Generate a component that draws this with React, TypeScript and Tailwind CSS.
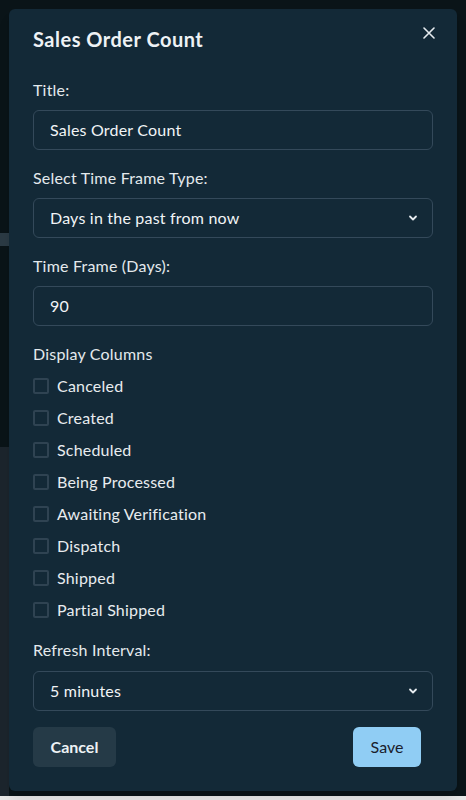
import React from "react";

const Chevron = () => (
  <svg width="12" height="12" viewBox="0 0 12 12" className="shrink-0">
    <path d="M3 4.5 L6 7.5 L9 4.5" fill="none" stroke="#e6ebef" strokeWidth="1.8" strokeLinecap="round" strokeLinejoin="round" />
  </svg>
);

const Field = ({ label, children }: { label: string; children: React.ReactNode }) => (
  <div className="flex flex-col gap-2">
    <div className="text-[16px] leading-6 text-[#e4e9ed] tracking-[0.2px]">{label}</div>
    {children}
  </div>
);

const Box = ({ text, select }: { text: string; select?: boolean }) => (
  <div className="h-10 rounded-md border border-[#34495a] flex items-center justify-between pl-4 pr-[13px] text-[16px] text-[#f1f4f6] tracking-[0.2px]">
    <span>{text}</span>
    {select && <Chevron />}
  </div>
);

const cols = [
  "Canceled",
  "Created",
  "Scheduled",
  "Being Processed",
  "Awaiting Verification",
  "Dispatch",
  "Shipped",
  "Partial Shipped",
];

export default function App() {
  return (
    <div
      className="relative w-[466px] h-[800px] bg-[#0a1418] overflow-hidden"
      style={{ fontFamily: "Lato, 'Open Sans', sans-serif" }}
    >
      <div className="absolute left-0 top-[233px] w-[9px] h-[13px] bg-[#2b3a44]" />
      <div className="absolute left-0 top-[447px] w-[9px] h-[353px] bg-[#1c252d]" />
      <div className="absolute left-0 bottom-0 w-full h-[4px] bg-[#e8e8e8]" />
      <div className="absolute left-[9px] top-[9px] w-[448px] h-[782px] rounded-md bg-[#132937] shadow-lg">
        <div className="relative px-6 pt-[15px] pb-4">
          <div className="text-[20px] leading-[30px] font-bold text-[#eef2f5] tracking-[0.5px]">Sales Order Count</div>
          <button className="absolute right-3 top-2 w-8 h-8 flex items-center justify-center">
            <svg width="12" height="12" viewBox="0 0 12 12">
              <path d="M1 1 L11 11 M11 1 L1 11" stroke="#e6ebef" strokeWidth="1.6" strokeLinecap="round" />
            </svg>
          </button>
        </div>
        <div className="px-6 pt-2 flex flex-col gap-4">
          <Field label="Title:">
            <Box text="Sales Order Count" />
          </Field>
          <Field label="Select Time Frame Type:">
            <Box text="Days in the past from now" select />
          </Field>
          <Field label="Time Frame (Days):">
            <Box text="90" />
          </Field>
          <div className="flex flex-col gap-2">
            <div className="text-[16px] leading-6 text-[#e4e9ed] tracking-[0.2px]">Display Columns</div>
            {cols.map((c) => (
              <div key={c} className="flex items-center gap-2 h-6">
                <div className="w-4 h-4 rounded-[2px] border-2 border-[#2f4352]" />
                <span className="text-[16px] text-[#e8ecef] tracking-[0.2px]">{c}</span>
              </div>
            ))}
          </div>
          <div className="flex flex-col gap-2">
            <div className="text-[16px] leading-6 text-[#e4e9ed] tracking-[0.2px]">Refresh Interval:</div>
            <div className="mt-px">
              <Box text="5 minutes" select />
            </div>
          </div>
          <div className="flex items-center justify-between pr-3">
            <button className="h-10 w-[83px] rounded-md bg-[#253a47] text-[16px] font-bold text-[#eef2f5]">Cancel</button>
            <button className="h-10 w-[68px] rounded-md bg-[#90cdf4] text-[16px] text-[#1a202c]">Save</button>
          </div>
        </div>
      </div>
    </div>
  );
}
